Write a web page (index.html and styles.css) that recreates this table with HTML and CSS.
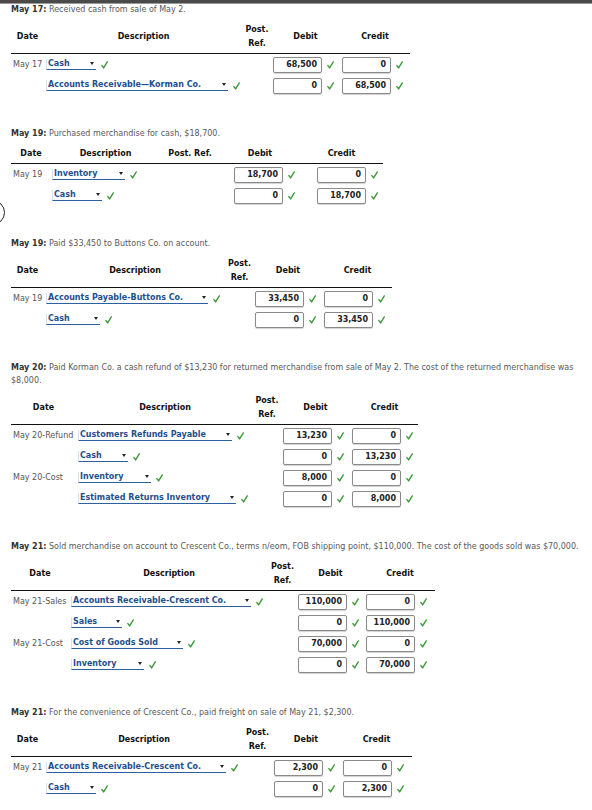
FILE: index.html
```html
<!DOCTYPE html>
<html lang="en">
<head>
<meta charset="utf-8">
<title>Journal entries</title>
<link rel="stylesheet" href="styles.css">
</head>
<body>
<div class="topbar"></div>
<div class="nav-circle"></div>
<main class="page">

<section class="entry">
  <p class="title first"><b>May 17:</b> Received cash from sale of May 2.</p>
  <table class="journal t1">
    <colgroup><col class="c-date"><col class="c-desc"><col class="c-post"><col class="c-debit"><col class="c-credit"></colgroup>
    <thead><tr><th>Date</th><th>Description</th><th>Post.<br>Ref.</th><th>Debit</th><th>Credit</th></tr></thead>
    <tbody>
      <tr>
        <td class="date">May 17</td>
        <td class="desc"><div class="cell"><span class="dd w-cash">Cash</span><svg class="ok" viewBox="0 0 8 9"><path d="M1 5.2 L3 7.8 L7.2 1"/></svg></div></td>
        <td></td>
        <td class="debit"><div class="cell"><input class="amt" value="68,500" readonly><svg class="ok" viewBox="0 0 8 9"><path d="M1 5.2 L3 7.8 L7.2 1"/></svg></div></td>
        <td class="credit"><div class="cell"><input class="amt" value="0" readonly><svg class="ok" viewBox="0 0 8 9"><path d="M1 5.2 L3 7.8 L7.2 1"/></svg></div></td>
      </tr>
      <tr>
        <td class="date"></td>
        <td class="desc"><div class="cell"><span class="dd w-ark">Accounts Receivable—Korman Co.</span><svg class="ok" viewBox="0 0 8 9"><path d="M1 5.2 L3 7.8 L7.2 1"/></svg></div></td>
        <td></td>
        <td class="debit"><div class="cell"><input class="amt" value="0" readonly><svg class="ok" viewBox="0 0 8 9"><path d="M1 5.2 L3 7.8 L7.2 1"/></svg></div></td>
        <td class="credit"><div class="cell"><input class="amt" value="68,500" readonly><svg class="ok" viewBox="0 0 8 9"><path d="M1 5.2 L3 7.8 L7.2 1"/></svg></div></td>
      </tr>
    </tbody>
  </table>
</section>

<section class="entry">
  <p class="title"><b>May 19:</b> Purchased merchandise for cash, $18,700.</p>
  <table class="journal t2">
    <colgroup><col class="c-date"><col class="c-desc"><col class="c-post"><col class="c-debit"><col class="c-credit"></colgroup>
    <thead><tr><th>Date</th><th>Description</th><th>Post. Ref.</th><th>Debit</th><th>Credit</th></tr></thead>
    <tbody>
      <tr>
        <td class="date">May 19</td>
        <td class="desc"><div class="cell"><span class="dd w-inv">Inventory</span><svg class="ok" viewBox="0 0 8 9"><path d="M1 5.2 L3 7.8 L7.2 1"/></svg></div></td>
        <td></td>
        <td class="debit"><div class="cell"><input class="amt" value="18,700" readonly><svg class="ok" viewBox="0 0 8 9"><path d="M1 5.2 L3 7.8 L7.2 1"/></svg></div></td>
        <td class="credit"><div class="cell"><input class="amt" value="0" readonly><svg class="ok" viewBox="0 0 8 9"><path d="M1 5.2 L3 7.8 L7.2 1"/></svg></div></td>
      </tr>
      <tr>
        <td class="date"></td>
        <td class="desc"><div class="cell"><span class="dd w-cash">Cash</span><svg class="ok" viewBox="0 0 8 9"><path d="M1 5.2 L3 7.8 L7.2 1"/></svg></div></td>
        <td></td>
        <td class="debit"><div class="cell"><input class="amt" value="0" readonly><svg class="ok" viewBox="0 0 8 9"><path d="M1 5.2 L3 7.8 L7.2 1"/></svg></div></td>
        <td class="credit"><div class="cell"><input class="amt" value="18,700" readonly><svg class="ok" viewBox="0 0 8 9"><path d="M1 5.2 L3 7.8 L7.2 1"/></svg></div></td>
      </tr>
    </tbody>
  </table>
</section>

<section class="entry">
  <p class="title"><b>May 19:</b> Paid $33,450 to Buttons Co. on account.</p>
  <table class="journal t3">
    <colgroup><col class="c-date"><col class="c-desc"><col class="c-post"><col class="c-debit"><col class="c-credit"></colgroup>
    <thead><tr><th>Date</th><th>Description</th><th>Post.<br>Ref.</th><th>Debit</th><th>Credit</th></tr></thead>
    <tbody>
      <tr>
        <td class="date">May 19</td>
        <td class="desc"><div class="cell"><span class="dd w-apb">Accounts Payable-Buttons Co.</span><svg class="ok" viewBox="0 0 8 9"><path d="M1 5.2 L3 7.8 L7.2 1"/></svg></div></td>
        <td></td>
        <td class="debit"><div class="cell"><input class="amt" value="33,450" readonly><svg class="ok" viewBox="0 0 8 9"><path d="M1 5.2 L3 7.8 L7.2 1"/></svg></div></td>
        <td class="credit"><div class="cell"><input class="amt" value="0" readonly><svg class="ok" viewBox="0 0 8 9"><path d="M1 5.2 L3 7.8 L7.2 1"/></svg></div></td>
      </tr>
      <tr>
        <td class="date"></td>
        <td class="desc"><div class="cell"><span class="dd w-cash wide">Cash</span><svg class="ok" viewBox="0 0 8 9"><path d="M1 5.2 L3 7.8 L7.2 1"/></svg></div></td>
        <td></td>
        <td class="debit"><div class="cell"><input class="amt" value="0" readonly><svg class="ok" viewBox="0 0 8 9"><path d="M1 5.2 L3 7.8 L7.2 1"/></svg></div></td>
        <td class="credit"><div class="cell"><input class="amt" value="33,450" readonly><svg class="ok" viewBox="0 0 8 9"><path d="M1 5.2 L3 7.8 L7.2 1"/></svg></div></td>
      </tr>
    </tbody>
  </table>
</section>

<section class="entry">
  <p class="title"><b>May 20:</b> Paid Korman Co. a cash refund of $13,230 for returned merchandise from sale of May 2. The cost of the returned merchandise was $8,000.</p>
  <table class="journal t4">
    <colgroup><col class="c-date"><col class="c-desc"><col class="c-post"><col class="c-debit"><col class="c-credit"></colgroup>
    <thead><tr><th>Date</th><th>Description</th><th>Post.<br>Ref.</th><th>Debit</th><th>Credit</th></tr></thead>
    <tbody>
      <tr>
        <td class="date">May 20-Refund</td>
        <td class="desc"><div class="cell"><span class="dd w-crp">Customers Refunds Payable</span><svg class="ok" viewBox="0 0 8 9"><path d="M1 5.2 L3 7.8 L7.2 1"/></svg></div></td>
        <td></td>
        <td class="debit"><div class="cell"><input class="amt" value="13,230" readonly><svg class="ok" viewBox="0 0 8 9"><path d="M1 5.2 L3 7.8 L7.2 1"/></svg></div></td>
        <td class="credit"><div class="cell"><input class="amt" value="0" readonly><svg class="ok" viewBox="0 0 8 9"><path d="M1 5.2 L3 7.8 L7.2 1"/></svg></div></td>
      </tr>
      <tr>
        <td class="date"></td>
        <td class="desc"><div class="cell"><span class="dd w-cash">Cash</span><svg class="ok" viewBox="0 0 8 9"><path d="M1 5.2 L3 7.8 L7.2 1"/></svg></div></td>
        <td></td>
        <td class="debit"><div class="cell"><input class="amt" value="0" readonly><svg class="ok" viewBox="0 0 8 9"><path d="M1 5.2 L3 7.8 L7.2 1"/></svg></div></td>
        <td class="credit"><div class="cell"><input class="amt" value="13,230" readonly><svg class="ok" viewBox="0 0 8 9"><path d="M1 5.2 L3 7.8 L7.2 1"/></svg></div></td>
      </tr>
      <tr>
        <td class="date">May 20-Cost</td>
        <td class="desc"><div class="cell"><span class="dd w-inv">Inventory</span><svg class="ok" viewBox="0 0 8 9"><path d="M1 5.2 L3 7.8 L7.2 1"/></svg></div></td>
        <td></td>
        <td class="debit"><div class="cell"><input class="amt" value="8,000" readonly><svg class="ok" viewBox="0 0 8 9"><path d="M1 5.2 L3 7.8 L7.2 1"/></svg></div></td>
        <td class="credit"><div class="cell"><input class="amt" value="0" readonly><svg class="ok" viewBox="0 0 8 9"><path d="M1 5.2 L3 7.8 L7.2 1"/></svg></div></td>
      </tr>
      <tr>
        <td class="date"></td>
        <td class="desc"><div class="cell"><span class="dd w-eri">Estimated Returns Inventory</span><svg class="ok" viewBox="0 0 8 9"><path d="M1 5.2 L3 7.8 L7.2 1"/></svg></div></td>
        <td></td>
        <td class="debit"><div class="cell"><input class="amt" value="0" readonly><svg class="ok" viewBox="0 0 8 9"><path d="M1 5.2 L3 7.8 L7.2 1"/></svg></div></td>
        <td class="credit"><div class="cell"><input class="amt" value="8,000" readonly><svg class="ok" viewBox="0 0 8 9"><path d="M1 5.2 L3 7.8 L7.2 1"/></svg></div></td>
      </tr>
    </tbody>
  </table>
</section>

<section class="entry">
  <p class="title"><b>May 21:</b> Sold merchandise on account to Crescent Co., terms n/eom, FOB shipping point, $110,000. The cost of the goods sold was $70,000.</p>
  <table class="journal t5">
    <colgroup><col class="c-date"><col class="c-desc"><col class="c-post"><col class="c-debit"><col class="c-credit"></colgroup>
    <thead><tr><th>Date</th><th>Description</th><th>Post.<br>Ref.</th><th>Debit</th><th>Credit</th></tr></thead>
    <tbody>
      <tr>
        <td class="date">May 21-Sales</td>
        <td class="desc"><div class="cell"><span class="dd w-arc">Accounts Receivable-Crescent Co.</span><svg class="ok" viewBox="0 0 8 9"><path d="M1 5.2 L3 7.8 L7.2 1"/></svg></div></td>
        <td></td>
        <td class="debit"><div class="cell"><input class="amt" value="110,000" readonly><svg class="ok" viewBox="0 0 8 9"><path d="M1 5.2 L3 7.8 L7.2 1"/></svg></div></td>
        <td class="credit"><div class="cell"><input class="amt" value="0" readonly><svg class="ok" viewBox="0 0 8 9"><path d="M1 5.2 L3 7.8 L7.2 1"/></svg></div></td>
      </tr>
      <tr>
        <td class="date"></td>
        <td class="desc"><div class="cell"><span class="dd w-sales">Sales</span><svg class="ok" viewBox="0 0 8 9"><path d="M1 5.2 L3 7.8 L7.2 1"/></svg></div></td>
        <td></td>
        <td class="debit"><div class="cell"><input class="amt" value="0" readonly><svg class="ok" viewBox="0 0 8 9"><path d="M1 5.2 L3 7.8 L7.2 1"/></svg></div></td>
        <td class="credit"><div class="cell"><input class="amt" value="110,000" readonly><svg class="ok" viewBox="0 0 8 9"><path d="M1 5.2 L3 7.8 L7.2 1"/></svg></div></td>
      </tr>
      <tr>
        <td class="date">May 21-Cost</td>
        <td class="desc"><div class="cell"><span class="dd w-cogs">Cost of Goods Sold</span><svg class="ok" viewBox="0 0 8 9"><path d="M1 5.2 L3 7.8 L7.2 1"/></svg></div></td>
        <td></td>
        <td class="debit"><div class="cell"><input class="amt" value="70,000" readonly><svg class="ok" viewBox="0 0 8 9"><path d="M1 5.2 L3 7.8 L7.2 1"/></svg></div></td>
        <td class="credit"><div class="cell"><input class="amt" value="0" readonly><svg class="ok" viewBox="0 0 8 9"><path d="M1 5.2 L3 7.8 L7.2 1"/></svg></div></td>
      </tr>
      <tr>
        <td class="date"></td>
        <td class="desc"><div class="cell"><span class="dd w-inv">Inventory</span><svg class="ok" viewBox="0 0 8 9"><path d="M1 5.2 L3 7.8 L7.2 1"/></svg></div></td>
        <td></td>
        <td class="debit"><div class="cell"><input class="amt" value="0" readonly><svg class="ok" viewBox="0 0 8 9"><path d="M1 5.2 L3 7.8 L7.2 1"/></svg></div></td>
        <td class="credit"><div class="cell"><input class="amt" value="70,000" readonly><svg class="ok" viewBox="0 0 8 9"><path d="M1 5.2 L3 7.8 L7.2 1"/></svg></div></td>
      </tr>
    </tbody>
  </table>
</section>

<section class="entry">
  <p class="title"><b>May 21:</b> For the convenience of Crescent Co., paid freight on sale of May 21, $2,300.</p>
  <table class="journal t6">
    <colgroup><col class="c-date"><col class="c-desc"><col class="c-post"><col class="c-debit"><col class="c-credit"></colgroup>
    <thead><tr><th>Date</th><th>Description</th><th>Post.<br>Ref.</th><th>Debit</th><th>Credit</th></tr></thead>
    <tbody>
      <tr>
        <td class="date">May 21</td>
        <td class="desc"><div class="cell"><span class="dd w-arc">Accounts Receivable-Crescent Co.</span><svg class="ok" viewBox="0 0 8 9"><path d="M1 5.2 L3 7.8 L7.2 1"/></svg></div></td>
        <td></td>
        <td class="debit"><div class="cell"><input class="amt" value="2,300" readonly><svg class="ok" viewBox="0 0 8 9"><path d="M1 5.2 L3 7.8 L7.2 1"/></svg></div></td>
        <td class="credit"><div class="cell"><input class="amt" value="0" readonly><svg class="ok" viewBox="0 0 8 9"><path d="M1 5.2 L3 7.8 L7.2 1"/></svg></div></td>
      </tr>
      <tr>
        <td class="date"></td>
        <td class="desc"><div class="cell"><span class="dd w-cash">Cash</span><svg class="ok" viewBox="0 0 8 9"><path d="M1 5.2 L3 7.8 L7.2 1"/></svg></div></td>
        <td></td>
        <td class="debit"><div class="cell"><input class="amt" value="0" readonly><svg class="ok" viewBox="0 0 8 9"><path d="M1 5.2 L3 7.8 L7.2 1"/></svg></div></td>
        <td class="credit"><div class="cell"><input class="amt" value="2,300" readonly><svg class="ok" viewBox="0 0 8 9"><path d="M1 5.2 L3 7.8 L7.2 1"/></svg></div></td>
      </tr>
    </tbody>
  </table>
</section>

</main>
</body>
</html>
```
FILE: styles.css
```css
html, body {
  margin: 0;
  padding: 0;
  background: #fff;
}

body {
  position: relative;
  font-family: "DejaVu Sans", Verdana, sans-serif;
  font-size: 8px;
  color: #555;
  width: 592px;
  height: 810px;
  overflow: hidden;
}

.topbar {
  height: 3px;
  background: #4a4a4a;
  border-bottom: 1px solid #9a9a9a;
}

.nav-circle {
  position: absolute;
  left: -20px;
  top: 200px;
  width: 23px;
  height: 23px;
  border: 1.5px solid #222;
  border-radius: 50%;
}

.page {
  padding: 0 8px 0 11px;
}

.entry {
  margin-bottom: 31px;
}

.title {
  margin: 0 0 7px;
  line-height: 13px;
  color: #595959;
}

.title.first {
  margin-top: -1px;
}

.title b {
  color: #333;
}

/* journal table */
.journal {
  border-collapse: collapse;
  table-layout: fixed;
  --dpad: 2px;
  --cpad: 2px;
  --spad: 2px;
}

.journal th {
  font-weight: bold;
  font-size: 8px;
  line-height: 14px;
  color: #111;
  text-align: center;
  vertical-align: middle;
  padding: 0 0 2px;
  border-bottom: 1px solid #111;
  white-space: nowrap;
}

.journal td {
  height: 21px;
  padding: 0;
  vertical-align: middle;
}

.journal td.date {
  padding-left: 2px;
  white-space: nowrap;
  color: #555;
}

.journal td.desc {
  padding-left: var(--spad);
}

.journal td.debit {
  padding-left: var(--dpad);
}

.journal td.credit {
  padding-left: var(--cpad);
}

.cell {
  display: flex;
  align-items: center;
  gap: 5px;
}

/* column widths per entry */
.t1 { width: 399px; }
.t1 .c-date { width: 33px; }
.t1 .c-desc { width: 199px; }
.t1 .c-post { width: 28px; }
.t1 .c-debit { width: 69px; }
.t1 .c-credit { width: 70px; }

.t2 { width: 372px; --spad: 1px; --dpad: 14px; --cpad: 17px; }
.t2 .c-date { width: 40px; }
.t2 .c-desc { width: 109px; }
.t2 .c-post { width: 60px; }
.t2 .c-debit { width: 80px; }
.t2 .c-credit { width: 83px; }

.t3 { width: 381px; --cpad: 1px; }
.t3 .c-date { width: 33px; }
.t3 .c-desc { width: 182px; }
.t3 .c-post { width: 27px; }
.t3 .c-debit { width: 70px; }
.t3 .c-credit { width: 69px; }

.t4 { width: 407px; --dpad: 3px; --cpad: 1px; }
.t4 .c-date { width: 65px; }
.t4 .c-desc { width: 178px; }
.t4 .c-post { width: 26px; }
.t4 .c-debit { width: 71px; }
.t4 .c-credit { width: 67px; }

.t5 { width: 424px; --cpad: 1px; }
.t5 .c-date { width: 58px; }
.t5 .c-desc { width: 200px; }
.t5 .c-post { width: 27px; }
.t5 .c-debit { width: 69px; }
.t5 .c-credit { width: 70px; }

.t6 { width: 401px; --dpad: 3px; --cpad: 2px; }
.t6 .c-date { width: 33px; }
.t6 .c-desc { width: 200px; }
.t6 .c-post { width: 27px; }
.t6 .c-debit { width: 70px; }
.t6 .c-credit { width: 71px; }

/* dropdown */
.dd {
  position: relative;
  display: inline-block;
  box-sizing: border-box;
  height: 11px;
  line-height: 10px;
  padding: 0 9px 0 1px;
  font-weight: bold;
  font-size: 8px;
  color: #1f4f8d;
  border-left: 1px solid #d6e0ec;
  border-bottom: 1px solid #2d609e;
  white-space: nowrap;
  overflow: hidden;
}

.dd::after {
  content: "";
  position: absolute;
  right: 2px;
  top: 3px;
  border-left: 2px solid transparent;
  border-right: 2px solid transparent;
  border-top: 3px solid #222;
}

.w-cash { width: 50px; }
.w-cash.wide { width: 54px; }
.w-inv { width: 73px; }
.w-ark { width: 182px; }
.w-apb { width: 162px; }
.w-crp { width: 154px; }
.w-eri { width: 158px; }
.w-arc { width: 180px; }
.w-sales { width: 51px; }
.w-cogs { width: 112px; }

/* amount input */
.amt {
  box-sizing: border-box;
  width: 49px;
  height: 16px;
  margin: 0;
  padding: 0 4px 0 0;
  font-family: "DejaVu Sans", Verdana, sans-serif;
  font-weight: bold;
  font-size: 8px;
  color: #222;
  text-align: right;
  background: #fff;
  border: 1px solid #8a8a8a;
  border-radius: 2px;
  box-shadow: 0 1px 1px rgba(0, 0, 0, 0.18);
  outline: none;
}

/* check mark */
.ok {
  flex: none;
  width: 7px;
  height: 8px;
}

.ok path {
  fill: none;
  stroke: #3b9a38;
  stroke-width: 1.6;
  stroke-linecap: round;
  stroke-linejoin: round;
}
```
